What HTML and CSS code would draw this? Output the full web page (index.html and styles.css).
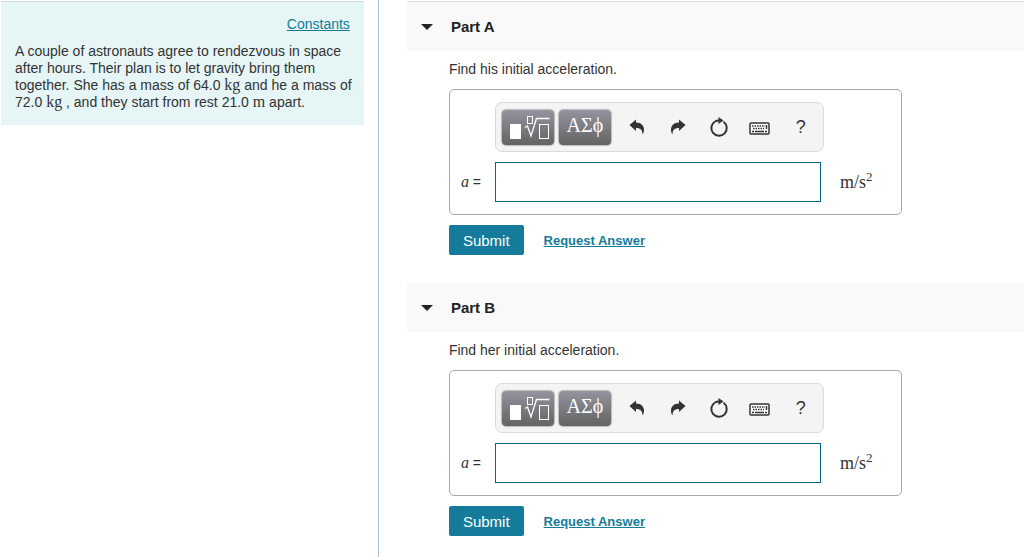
FILE: index.html
```html
<!DOCTYPE html>
<html lang="en">
<head>
  <meta charset="UTF-8">
  <title>Astronaut Rendezvous</title>
  <link rel="stylesheet" href="styles.css">
</head>
<body>
  <!-- shared toolbar icons -->
  <svg class="sprite" aria-hidden="true">
    <symbol id="icon-template" viewBox="0 0 52 35">
      <rect x="8" y="14" width="11" height="15" fill="#fff"/>
      <g fill="none" stroke="#fff">
        <rect x="25.5" y="6.5" width="5" height="7"/>
        <path d="M23 17.5l2.500-1.500 3.500 10L34.500 8.500h13" stroke-width="1.300"/>
        <rect x="37.500" y="14.500" width="9" height="14"/>
      </g>
    </symbol>
    <symbol id="icon-undo" viewBox="0 0 16 16">
      <path fill="#333" d="M0.500 6L7 0.500V3.500c5.500 0 8 3.500 8 7 0 2-.6 4-1.500 5 0-4.500-2-6.500-6.500-6.500V12z"/>
    </symbol>
    <symbol id="icon-redo" viewBox="0 0 16 16">
      <path fill="#333" d="M15.500 6L9 0.500V3.500C3.500 3.500 1 7 1 10.500c0 2 .6 4 1.500 5 0-4.500 2-6.500 6.500-6.500V12z"/>
    </symbol>
    <symbol id="icon-reset" viewBox="0 0 20 20">
      <path fill="none" stroke="#333" stroke-width="2" d="M14.500 4.800A7.700 7.700 0 1 1 6 4.500"/>
      <path fill="none" stroke="#333" stroke-width="2" d="M6 4.500Q8 3.300 10.500 3.500"/>
      <path fill="#333" d="M9.500 0L14.500 3.500 9.500 7z"/>
    </symbol>
    <symbol id="icon-keyboard" viewBox="0 0 21 13">
      <rect x="1" y="1" width="19" height="11" rx="1" fill="#fff" stroke="#333" stroke-width="1.500"/>
      <g stroke="#333" stroke-width="1.500">
        <path d="M3 4h13" stroke-dasharray="1.500 1"/>
        <path d="M4 6.500h11" stroke-dasharray="1.500 1"/>
        <path d="M3 9.500h2M6 9.500h9M16 9.500h2"/>
        <path d="M17.500 3v4"/>
      </g>
    </symbol>
  </svg>

  <div class="page">
    <aside class="sidebar">
      <div class="problem">
        <a class="constants" href="#">Constants</a>
        <p>A couple of astronauts agree to rendezvous in space after hours. Their plan is to let gravity bring them together. She has a mass of 64.0 <span class="unit">kg</span> and he a mass of 72.0 <span class="unit">kg</span> , and they start from rest 21.0 <span class="unit">m</span> apart.</p>
      </div>
    </aside>

    <main class="parts">
      <section class="part">
        <h2 class="part-header">
          <button class="toggle" type="button"><span class="caret"></span>Part A</button>
        </h2>
        <form class="part-body">
          <p class="question">Find his initial acceleration.</p>
          <div class="answer-box">
            <div class="toolbar">
              <button class="tool dark" type="button" aria-label="Templates"><svg width="52" height="35"><use href="#icon-template"/></svg></button>
              <button class="tool dark symbols" type="button">ΑΣϕ</button>
              <button class="tool" type="button" aria-label="Undo"><svg width="16" height="16"><use href="#icon-undo"/></svg></button>
              <button class="tool" type="button" aria-label="Redo"><svg width="16" height="16"><use href="#icon-redo"/></svg></button>
              <button class="tool" type="button" aria-label="Reset"><svg width="20" height="20"><use href="#icon-reset"/></svg></button>
              <button class="tool keyboard" type="button" aria-label="Keyboard"><svg width="21" height="13"><use href="#icon-keyboard"/></svg></button>
              <button class="tool help" type="button">?</button>
            </div>
            <label class="variable" for="answerA"><i>a</i> =</label>
            <input class="answer" type="text" id="answerA">
            <span class="answer-unit">m/s<sup>2</sup></span>
          </div>
          <div class="actions">
            <button class="submit" type="submit">Submit</button>
            <a class="request" href="#">Request Answer</a>
          </div>
        </form>
      </section>

      <section class="part">
        <h2 class="part-header">
          <button class="toggle" type="button"><span class="caret"></span>Part B</button>
        </h2>
        <form class="part-body">
          <p class="question">Find her initial acceleration.</p>
          <div class="answer-box">
            <div class="toolbar">
              <button class="tool dark" type="button" aria-label="Templates"><svg width="52" height="35"><use href="#icon-template"/></svg></button>
              <button class="tool dark symbols" type="button">ΑΣϕ</button>
              <button class="tool" type="button" aria-label="Undo"><svg width="16" height="16"><use href="#icon-undo"/></svg></button>
              <button class="tool" type="button" aria-label="Redo"><svg width="16" height="16"><use href="#icon-redo"/></svg></button>
              <button class="tool" type="button" aria-label="Reset"><svg width="20" height="20"><use href="#icon-reset"/></svg></button>
              <button class="tool keyboard" type="button" aria-label="Keyboard"><svg width="21" height="13"><use href="#icon-keyboard"/></svg></button>
              <button class="tool help" type="button">?</button>
            </div>
            <label class="variable" for="answerB"><i>a</i> =</label>
            <input class="answer" type="text" id="answerB">
            <span class="answer-unit">m/s<sup>2</sup></span>
          </div>
          <div class="actions">
            <button class="submit" type="submit">Submit</button>
            <a class="request" href="#">Request Answer</a>
          </div>
        </form>
      </section>
    </main>
  </div>
</body>
</html>
```

FILE: styles.css
```css
* {
  box-sizing: border-box;
}
body {
  margin: 0;
  font-family: "Liberation Sans", Arial, sans-serif;
  font-size: 14px;
  line-height: 17px;
  color: #333;
  background: #fff;
}
p, h2 {
  margin: 0;
}
button {
  font-family: inherit;
  border: none;
  cursor: pointer;
}
a {
  color: #147c9a;
}
.sprite {
  display: none;
}
.page {
  display: grid;
  grid-template-columns: 37% 1fr;
  min-height: 100vh;
}

/* problem statement */
.sidebar {
  padding: 1px 14px 0 1px;
  border-right: 1px solid #b0c4d9;
}
.problem {
  padding: 14px 6px 14px 14px;
  border-top: 1px solid #d0dede;
  background: #e6f6f7;
}
.constants {
  display: block;
  margin: 0 8px 10px 0;
  text-align: right;
}
.unit, .variable i, .answer-unit {
  font-family: "Liberation Serif", "Times New Roman", serif;
}
.unit {
  font-size: 16px;
  line-height: 1;
}

/* parts */
.parts {
  padding: 1px 0 0 28px;
}
.part {
  margin-bottom: 28px;
}
.part:first-child .part-header {
  border-top: 1px solid #ddd;
}
.part-header {
  background: #f9f9f9;
}
.toggle {
  display: flex;
  align-items: center;
  gap: 18px;
  width: 100%;
  height: 49px;
  padding: 0 14px;
  font-size: 15px;
  font-weight: bold;
  color: #222;
  background: none;
}
.caret {
  border: 6px solid transparent;
  border-top: 6px solid #222;
  border-bottom: none;
}
.part-body {
  padding: 10px 20px 0 42px;
}
.question {
  margin-bottom: 11px;
}
.answer-box {
  display: grid;
  grid-template-columns: 34px 326px 1fr;
  align-items: center;
  row-gap: 10px;
  max-width: 453px;
  padding: 12px 11px;
  border: 1px solid #aaa;
  border-radius: 5px;
}
.toolbar {
  grid-column: 2 / -1;
  justify-self: start;
  display: flex;
  align-items: center;
  gap: 5px;
  width: 329px;
  height: 50px;
  padding: 0 6px;
  border: 1px solid #dadada;
  border-radius: 7px;
  background: #f4f4f4;
}
.tool {
  display: flex;
  flex: none;
  align-items: center;
  justify-content: center;
  width: 36px;
  height: 35px;
  padding: 0;
  color: #333;
  background: none;
}
.dark {
  width: 52px;
  border-radius: 4px;
  color: #fff;
  background: linear-gradient(#95949f, #636363);
  box-shadow: 0 0 1px 1px #bbb;
}
.symbols {
  margin-right: 3px;
  padding-bottom: 3px;
  font-family: "Liberation Serif", serif;
  font-size: 20px;
}
.keyboard {
  padding-top: 3px;
}
.help {
  font-size: 18px;
}
.variable i {
  font-size: 16px;
}
.answer {
  width: 100%;
  height: 40px;
  padding: 0 8px;
  border: 1px solid #006b87;
  font-size: 16px;
}
.answer-unit {
  padding-left: 19px;
  font-size: 18px;
}
.answer-unit sup {
  font-size: 13px;
  line-height: 0;
}
.actions {
  display: flex;
  align-items: center;
  gap: 20px;
  margin-top: 10px;
}
.submit {
  height: 30px;
  padding: 0 14px;
  border-radius: 2px;
  font-size: 15px;
  color: #fff;
  background: #147c9a;
}
.request {
  font-size: 13px;
  font-weight: bold;
}
```
